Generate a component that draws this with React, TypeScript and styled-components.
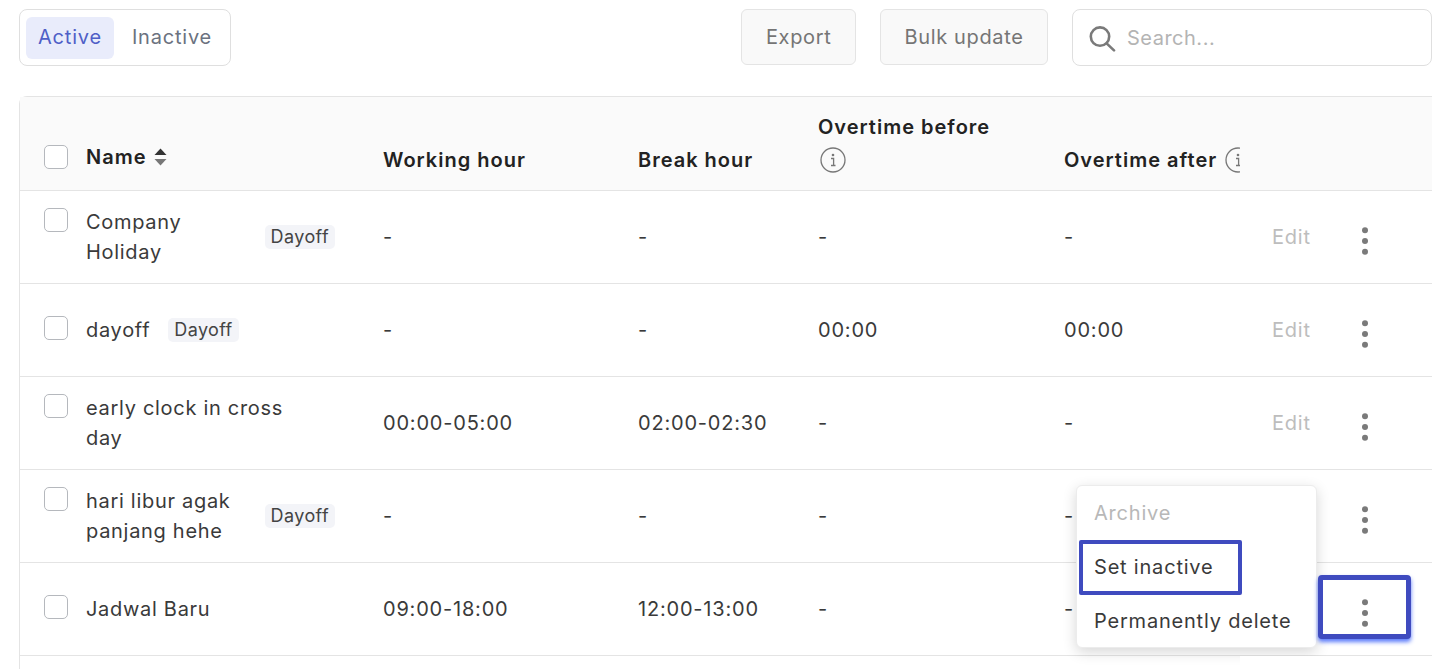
import styled, { createGlobalStyle } from 'styled-components';

const GlobalStyle = createGlobalStyle`
  html, body {
    margin: 0;
    padding: 0;
    background: #fff;
    overflow: hidden;
  }
  body {
    font-family: Inter, "Liberation Sans", sans-serif;
    font-size: 20px;
    letter-spacing: 0.8px;
    color: #3a3a3a;
  }
`;

const Page = styled.div`
  position: relative;
  width: 1438px;
  height: 669px;
  overflow: hidden;
  padding: 9px 6px 0 19px;
  box-sizing: border-box;
`;

const Toolbar = styled.div`
  display: flex;
  align-items: flex-start;
  height: 57px;
  margin-bottom: 30px;
`;

const Segmented = styled.div`
  display: flex;
  align-items: center;
  gap: 2px;
  box-sizing: border-box;
  width: 212px;
  height: 57px;
  padding: 0 6px;
  border: 1px solid #dfdfdf;
  border-radius: 8px;
  margin-right: auto;
`;

const Segment = styled.div<{ $active?: boolean }>`
  height: 42px;
  line-height: 41px;
  padding: 0 12px;
  border-radius: 6px;
  background: ${(p) => (p.$active ? '#e9ecfb' : 'transparent')};
  color: ${(p) => (p.$active ? '#4f5fc7' : '#6b7280')};
  margin-left: ${(p) => (p.$active ? '0' : '4px')};
`;

const GhostButton = styled.div`
  box-sizing: border-box;
  height: 56px;
  line-height: 54px;
  padding: 0 23.5px;
  margin-right: 24px;
  border: 1px solid #e4e4e4;
  border-radius: 6px;
  background: #f9f9f9;
  color: #757575;
  letter-spacing: 0.65px;
`;

const SearchBox = styled.div`
  display: flex;
  align-items: center;
  gap: 11px;
  box-sizing: border-box;
  width: 360px;
  height: 57px;
  padding: 0 15px;
  border: 1px solid #dfdfdf;
  border-radius: 8px;
  color: #b4b4b4;
  letter-spacing: 0.5px;
`;

const Table = styled.div`
  border: 1px solid #e4e4e4;
  border-bottom: none;
  border-right: none;
  border-radius: 8px 0 0 0;
`;

const HeadRow = styled.div`
  display: grid;
  grid-template-columns: 363px 255px 180px 246px 176px 192px;
  align-items: end;
  height: 94px;
  box-sizing: border-box;
  padding-bottom: 15px;
  background: #fafafa;
  border-bottom: 1px solid #e4e4e4;
  font-weight: 600;
  color: #222;
  white-space: nowrap;
  letter-spacing: 1px;
`;

const HeadCell = styled.div`
  overflow: hidden;
  line-height: 30px;
`;

const HeadName = styled.div`
  display: flex;
  align-items: center;
  padding: 0 0 6px 24px;
`;

const InfoLine = styled.div<{ $indent?: boolean }>`
  display: flex;
  align-items: center;
  gap: 8px;
  height: 30px;
  margin-top: ${(p) => (p.$indent ? '3px' : '0')};
  padding-left: ${(p) => (p.$indent ? '2px' : '0')};
`;

const Row = styled.div`
  display: grid;
  grid-template-columns: 363px 255px 180px 246px 176px 192px;
  align-items: center;
  height: 93px;
  box-sizing: border-box;
  border-bottom: 1px solid #e4e4e4;
`;

const NameCell = styled.div`
  display: flex;
  align-items: flex-start;
  padding-left: 24px;
`;

const Checkbox = styled.span`
  flex: none;
  width: 24px;
  height: 24px;
  box-sizing: border-box;
  margin: 1px 18px 0 0;
  border: 1px solid #b5b8bd;
  border-radius: 5px;
  background: #fff;
`;

const NameWrap = styled.div`
  display: flex;
  align-items: center;
  width: 249px;
  gap: 18px;
`;

const NameText = styled.div<{ $narrow?: boolean }>`
  line-height: 30px;
  letter-spacing: 0.7px;
  max-width: ${(p) => (p.$narrow ? '210px' : 'none')};
`;

const Tag = styled.span`
  flex: none;
  height: 24px;
  line-height: 24px;
  padding: 0 6px;
  border-radius: 5px;
  background: #f3f4f8;
  color: #444;
  font-size: 18px;
  letter-spacing: 0.4px;
`;

const Actions = styled.div`
  display: flex;
  align-items: center;
  padding-left: 32px;
  height: 100%;
  position: relative;
`;

const EditLink = styled.span`
  color: #bdbdbd;
  width: 46px;
`;

const KebabButton = styled.div<{ $focused?: boolean }>`
  display: flex;
  justify-content: center;
  box-sizing: border-box;
  width: 93px;
  height: 64px;
  margin-bottom: 4px;
  padding-top: 18px;
  border: 5px solid ${(p) => (p.$focused ? '#3f4bbf' : 'transparent')};
  border-radius: 4px;
  box-shadow: ${(p) => (p.$focused ? '0 3px 4px rgba(50, 90, 250, 0.8)' : 'none')};
  position: relative;
  z-index: 3;
  background: ${(p) => (p.$focused ? '#fff' : 'transparent')};
`;

const TailRow = styled.div`
  display: flex;
  height: 14px;
`;

const TailCover = styled.div`
  margin-left: 1220px;
  flex: 1;
  background: #fff;
  position: relative;
  z-index: 2;
`;

const Menu = styled.div`
  position: absolute;
  left: 1076px;
  top: 485px;
  z-index: 1;
  box-sizing: border-box;
  width: 241px;
  height: 163px;
  padding: 0 3px 0 2px;
  background: #fff;
  border: 1px solid #ececec;
  border-radius: 6px;
  box-shadow: 0 4px 14px rgba(0, 0, 0, 0.16);
`;

const MenuItem = styled.div<{ $disabled?: boolean }>`
  box-sizing: border-box;
  height: 54px;
  line-height: ${(p) => (p.$disabled ? '54px' : '52px')};
  padding-left: 15px;
  color: ${(p) => (p.$disabled ? '#b8b8b8' : '#3a3a3a')};
`;

const FocusedMenuItem = styled.div`
  box-sizing: border-box;
  width: 163px;
  height: 55px;
  line-height: 46px;
  padding-left: 11px;
  border: 4px solid #3f4bbf;
  border-radius: 2px;
`;

const SearchIcon = () => (
  <svg width="28" height="28" viewBox="0 0 28 28" fill="none" stroke="#7a7a7a" strokeWidth="2.6" strokeLinecap="round">
    <circle cx="12" cy="12.6" r="9.2" />
    <path d="M18.6 19.4 L26 26.4" />
  </svg>
);

const SortIcon = () => (
  <svg width="13" height="20" viewBox="0 0 13 20" style={{ marginLeft: 7 }}>
    <path d="M6.5 1.5 L12.5 8 H0.5 Z" fill="#333" />
    <path d="M6.5 18.5 L12.5 12 H0.5 Z" fill="#777" />
  </svg>
);

const InfoIcon = () => (
  <svg width="26" height="26" viewBox="0 0 26 26" fill="none" style={{ flex: 'none' }}>
    <circle cx="13" cy="13" r="12" stroke="#777" strokeWidth="1.3" />
    <circle cx="13" cy="8" r="1.3" fill="#777" />
    <path d="M11 11.5 H13.6 V18 M11 18.5 H15.5" stroke="#777" strokeWidth="1.3" />
  </svg>
);

const KebabIcon = () => (
  <svg width="8" height="30" viewBox="0 0 8 30" fill="#7a7a7a">
    <circle cx="4" cy="4.3" r="3" />
    <circle cx="4" cy="15" r="3" />
    <circle cx="4" cy="25.7" r="3" />
  </svg>
);

type RowData = {
  name: string;
  dayoff?: boolean;
  narrow?: boolean;
  work: string;
  brk: string;
  before: string;
  after: string;
  edit?: boolean;
  focused?: boolean;
};

const rows: RowData[] = [
  { name: 'Company Holiday', dayoff: true, work: '-', brk: '-', before: '-', after: '-', edit: true },
  { name: 'dayoff', dayoff: true, work: '-', brk: '-', before: '00:00', after: '00:00', edit: true },
  { name: 'early clock in cross day', narrow: true, work: '00:00-05:00', brk: '02:00-02:30', before: '-', after: '-', edit: true },
  { name: 'hari libur agak panjang hehe', dayoff: true, work: '-', brk: '-', before: '-', after: '-' },
  { name: 'Jadwal Baru', work: '09:00-18:00', brk: '12:00-13:00', before: '-', after: '-', focused: true },
];

const App = () => {
  return (
    <Page>
      <GlobalStyle />
      <Toolbar>
        <Segmented>
          <Segment $active>Active</Segment>
          <Segment>Inactive</Segment>
        </Segmented>
        <GhostButton>Export</GhostButton>
        <GhostButton>Bulk update</GhostButton>
        <SearchBox>
          <SearchIcon />
          Search...
        </SearchBox>
      </Toolbar>
      <Table>
        <HeadRow>
          <HeadName>
            <Checkbox />
            Name
            <SortIcon />
          </HeadName>
          <HeadCell>Working hour</HeadCell>
          <HeadCell>Break hour</HeadCell>
          <HeadCell>
            Overtime before
            <InfoLine $indent>
              <InfoIcon />
            </InfoLine>
          </HeadCell>
          <HeadCell>
            <InfoLine>
              Overtime after
              <InfoIcon />
            </InfoLine>
          </HeadCell>
          <div />
        </HeadRow>
        {rows.map((r) => (
          <Row key={r.name}>
            <NameCell>
              <Checkbox />
              <NameWrap>
                <NameText $narrow={r.narrow}>{r.name}</NameText>
                {r.dayoff && <Tag>Dayoff</Tag>}
              </NameWrap>
            </NameCell>
            <div>{r.work}</div>
            <div>{r.brk}</div>
            <div>{r.before}</div>
            <div>{r.after}</div>
            <Actions>
              <EditLink>{r.edit ? 'Edit' : ''}</EditLink>
              <KebabButton $focused={r.focused}>
                <KebabIcon />
              </KebabButton>
            </Actions>
          </Row>
        ))}
        <TailRow>
          <TailCover />
        </TailRow>
      </Table>
      <Menu>
        <MenuItem $disabled>Archive</MenuItem>
        <FocusedMenuItem>Set inactive</FocusedMenuItem>
        <MenuItem>Permanently delete</MenuItem>
      </Menu>
    </Page>
  );
};

export default App;
